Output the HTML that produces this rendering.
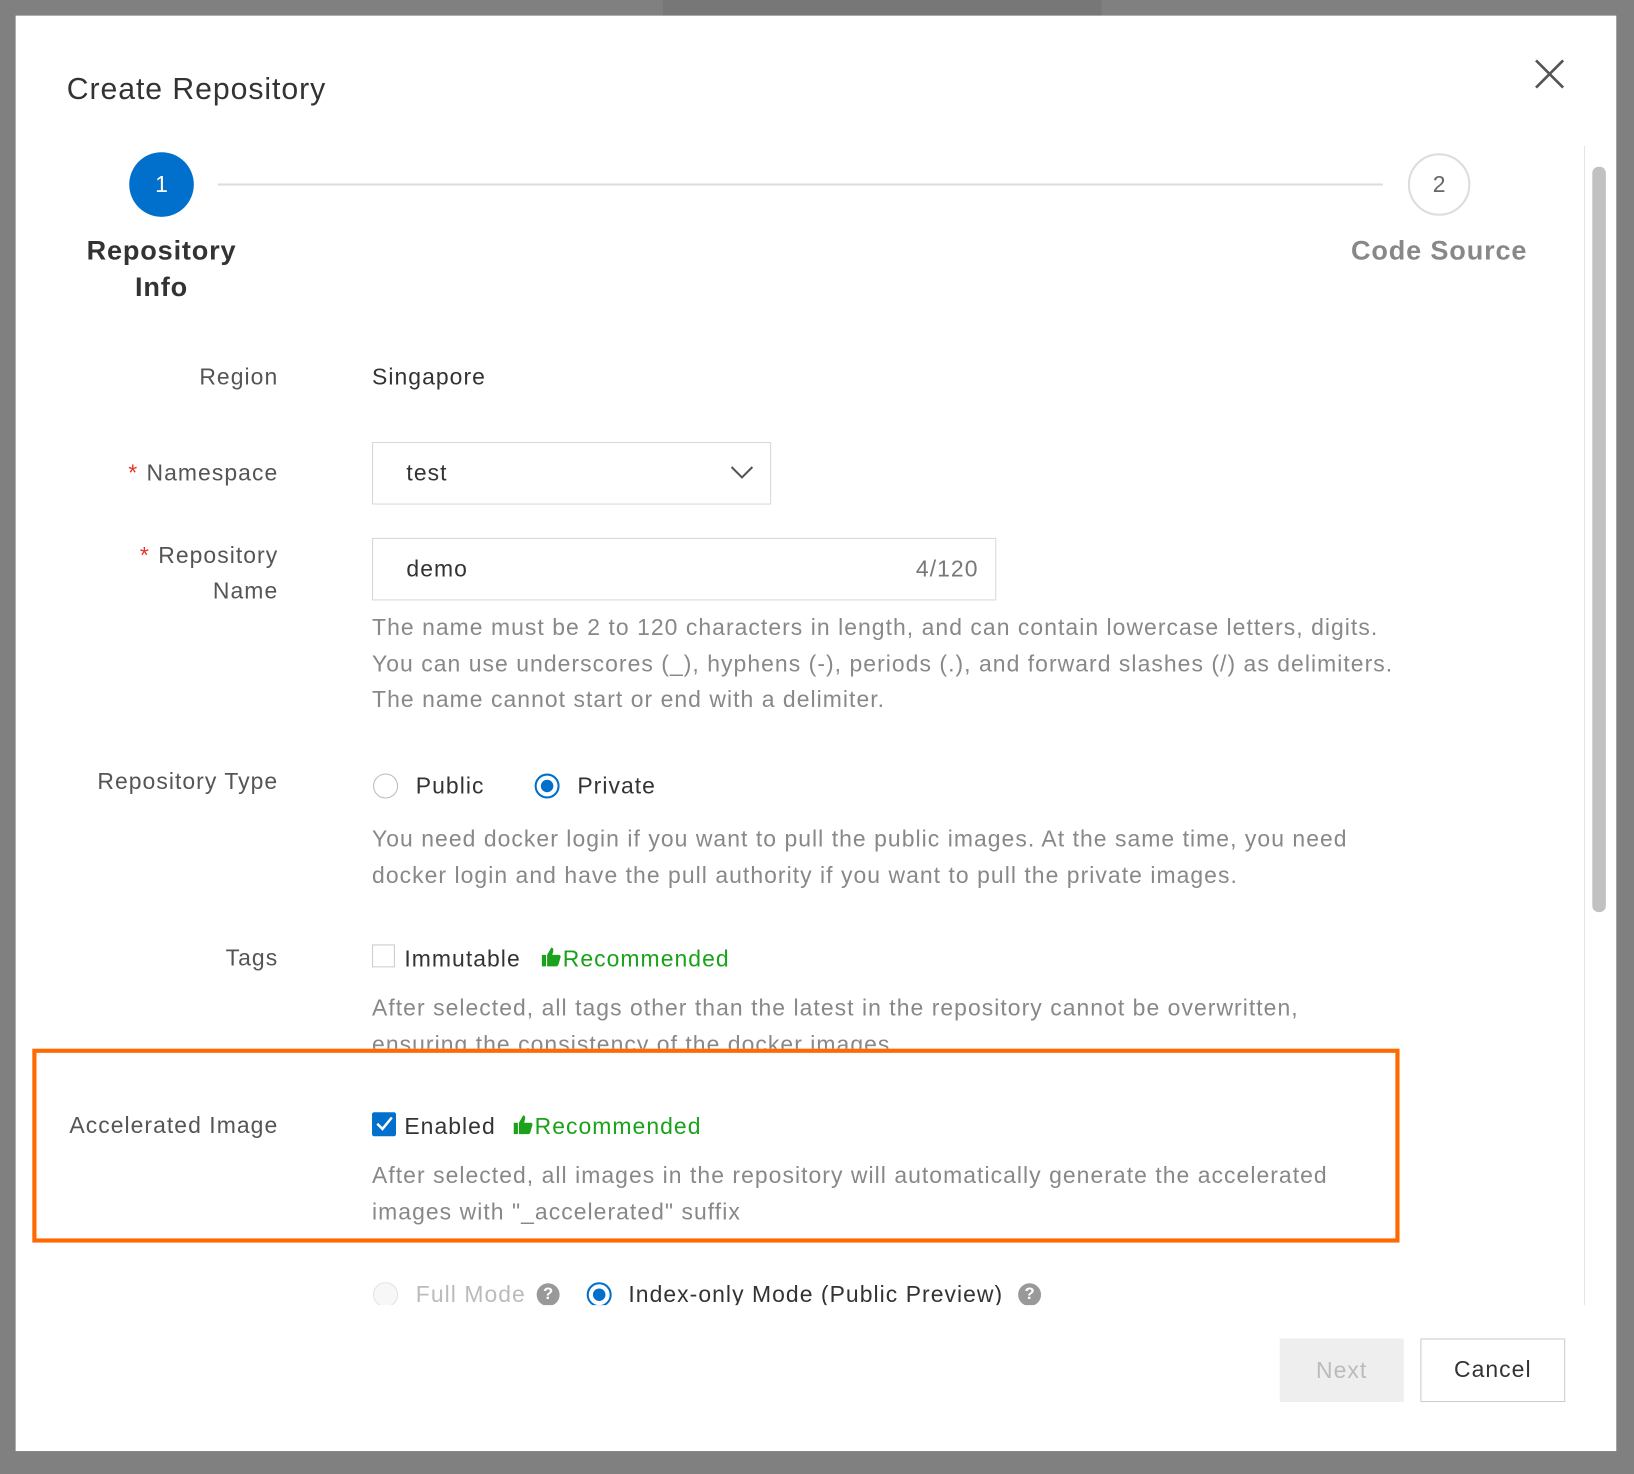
<!DOCTYPE html>
<html><head><meta charset="utf-8"><style>
html,body{margin:0;padding:0;width:1634px;height:1474px;overflow:hidden;background:#808080}
#s{position:absolute;left:0;top:0;width:1568px;height:1414px;transform-origin:0 0;transform:scale(1.04209,1.04243);font-family:"Liberation Sans",sans-serif;letter-spacing:1px}
.a{position:absolute;white-space:nowrap}
.lbl{position:absolute;right:1301px;font-size:22px;color:#555;line-height:26px;text-align:right;white-space:nowrap}
.t{position:absolute;left:357px;font-size:22px;color:#333;line-height:26px;white-space:nowrap}
.h{position:absolute;left:357px;font-size:22px;color:#888;line-height:34.5px;white-space:nowrap}
.req{color:#e5332a;margin-right:8px}
.rd{position:absolute;width:24px;height:24px;border:1.5px solid #bbb;border-radius:50%;box-sizing:border-box;background:#fff}
.rd.on{border:2px solid #0070cc}
.rd.on::after{content:"";position:absolute;left:4px;top:4px;width:12px;height:12px;border-radius:50%;background:#0070cc}
.q{position:absolute;width:22px;height:22px;border-radius:50%;background:#999;color:#fff;font-size:16px;font-weight:bold;text-align:center;line-height:22px;letter-spacing:0}
</style></head><body><div id="s">
<div class="a" style="left:636px;top:0;width:421px;height:15px;background:#777"></div>
<div class="a" style="left:15px;top:15px;width:1536px;height:1377px;background:#fff;overflow:hidden"></div>
<div class="a" style="left:64px;top:70px;font-size:29px;color:#333;letter-spacing:0.9px">Create Repository</div>
<svg class="a" style="left:1472px;top:56px" width="30" height="30"><path d="M2 2L28 28M28 2L2 28" stroke="#555" stroke-width="2.6"/></svg>
<div class="a" style="left:1520px;top:140px;width:1px;height:1112px;background:#e5e5e5"></div>
<div class="a" style="left:1528px;top:160px;width:13px;height:715px;background:#c1c1c1;border-radius:6px"></div>
<div class="a" style="left:209px;top:176px;width:1118px;height:2px;background:#ddd"></div>
<div class="a" style="left:124px;top:146px;width:62px;height:62px;border-radius:50%;background:#0070cc;color:#fff;font-size:22px;text-align:center;line-height:62px;letter-spacing:0">1</div>
<div class="a" style="left:1351px;top:147px;width:60px;height:60px;border-radius:50%;border:2px solid #ddd;box-sizing:border-box;color:#666;font-size:22px;text-align:center;line-height:56px;letter-spacing:0">2</div>
<div class="a" style="left:35px;top:223px;width:240px;text-align:center;font-size:26px;font-weight:bold;color:#333;line-height:35px;white-space:normal;letter-spacing:0.8px">Repository<br>Info</div>
<div class="a" style="left:1261px;top:223px;width:240px;text-align:center;font-size:26px;font-weight:bold;color:#888;line-height:35px;letter-spacing:0.8px">Code Source</div>

<div class="lbl" style="top:349px">Region</div>
<div class="t" style="top:349px">Singapore</div>

<div class="lbl" style="top:441px"><span class="req">*</span>Namespace</div>
<div class="a" style="left:357px;top:424px;width:383px;height:60px;border:1.5px solid #d8d8d8;box-sizing:border-box"></div>
<div class="t" style="left:390px;top:441px">test</div>
<svg class="a" style="left:700px;top:446px" width="24" height="14"><path d="M2 2L12 12L22 2" fill="none" stroke="#555" stroke-width="2"/></svg>

<div class="lbl" style="top:520px"><span class="req">*</span>Repository</div>
<div class="lbl" style="top:554px">Name</div>
<div class="a" style="left:357px;top:516px;width:599px;height:60px;border:1.5px solid #d8d8d8;box-sizing:border-box"></div>
<div class="t" style="left:390px;top:533px">demo</div>
<div class="a" style="right:629px;top:533px;font-size:22px;color:#777;line-height:26px">4/120</div>
<div class="h" style="top:585px">The name must be 2 to 120 characters in length, and can contain lowercase letters, digits.<br>You can use underscores (_), hyphens (-), periods (.), and forward slashes (/) as delimiters.<br>The name cannot start or end with a delimiter.</div>

<div class="lbl" style="top:737px">Repository Type</div>
<div class="rd" style="left:358px;top:742px"></div>
<div class="t" style="left:399px;top:741px">Public</div>
<div class="rd on" style="left:513px;top:742px"></div>
<div class="t" style="left:554px;top:741px">Private</div>
<div class="h" style="top:788px">You need docker login if you want to pull the public images. At the same time, you need<br>docker login and have the pull authority if you want to pull the private images.</div>

<div class="lbl" style="top:906px">Tags</div>
<div class="a" style="left:357px;top:906px;width:22px;height:22px;border:1.5px solid #ccc;box-sizing:border-box"></div>
<div class="t" style="left:388px;top:907px">Immutable</div>
<svg class="a" style="left:519px;top:908px" width="20" height="20"><path d="M1 8h4v11H1zM6 8l4-7c2 0 2 2 2 3l-1 4h6c1.5 0 2 1 2 2l-2 7c-.3 1-1 2-2 2H6z" fill="#1aa31a"/></svg>
<div class="t" style="left:540px;top:907px;color:#1aa31a">Recommended</div>
<div class="h" style="top:950px">After selected, all tags other than the latest in the repository cannot be overwritten,<br>ensuring the consistency of the docker images.</div>

<div class="a" style="left:31px;top:1006px;width:1312px;height:186px;border:4px solid #ff6a00;box-sizing:border-box;background:#fff"></div>
<div class="lbl" style="top:1067px">Accelerated Image</div>
<div class="a" style="left:357px;top:1067px;width:23px;height:23px;background:#0070cc;border-radius:2px"></div>
<svg class="a" style="left:357px;top:1067px" width="23" height="23"><path d="M5 11l5 5 9-11" fill="none" stroke="#fff" stroke-width="2.4"/></svg>
<div class="t" style="left:388px;top:1068px">Enabled</div>
<svg class="a" style="left:492px;top:1069px" width="20" height="20"><path d="M1 8h4v11H1zM6 8l4-7c2 0 2 2 2 3l-1 4h6c1.5 0 2 1 2 2l-2 7c-.3 1-1 2-2 2H6z" fill="#1aa31a"/></svg>
<div class="t" style="left:513px;top:1068px;color:#1aa31a">Recommended</div>
<div class="h" style="top:1111px">After selected, all images in the repository will automatically generate the accelerated<br>images with "_accelerated" suffix</div>

<div class="a" style="left:15px;top:1200px;width:1500px;height:52px;overflow:hidden">
<div class="rd" style="left:343px;top:30px;border-color:#e3e3e3;background:#f7f7f7"></div>
<div class="t" style="left:384px;top:29px;color:#bbb">Full Mode</div>
<div class="q" style="left:500px;top:31px">?</div>
<div class="rd on" style="left:548px;top:30px"></div>
<div class="t" style="left:588px;top:29px">Index-only Mode (Public Preview)</div>
<div class="q" style="left:962px;top:31px">?</div>
</div>

<div class="a" style="left:1228px;top:1284px;width:119px;height:61px;background:#eee;color:#bbb;font-size:22px;text-align:center;line-height:61px">Next</div>
<div class="a" style="left:1363px;top:1284px;width:139px;height:61px;border:1.5px solid #ccc;box-sizing:border-box;color:#333;font-size:22px;text-align:center;line-height:58px">Cancel</div>
</div></body></html>
